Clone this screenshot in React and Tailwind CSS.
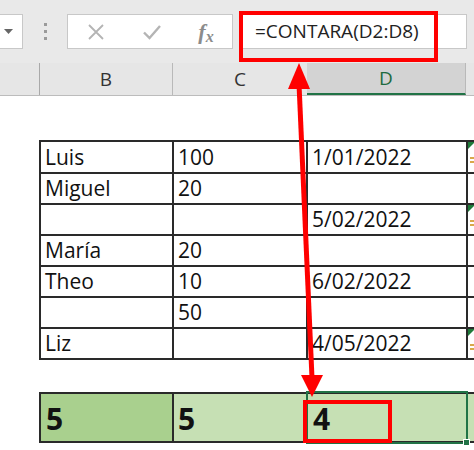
import React from 'react';

const rows = [
  { b: 'Luis', c: '100', d: '1/01/2022', h: 'h-[32px]', mark: true },
  { b: 'Miguel', c: '20', d: '', h: 'h-[31px]' },
  { b: '', c: '', d: '5/02/2022', h: 'h-[31px]', mark: true },
  { b: 'María', c: '20', d: '', h: 'h-[31px]' },
  { b: 'Theo', c: '10', d: '6/02/2022', h: 'h-[31px]' },
  { b: '', c: '50', d: '', h: 'h-[31px]' },
  { b: 'Liz', c: '', d: '4/05/2022', h: 'h-[31px]', mark: true },
];

const cellFont = { fontFamily: '"Open Sans", "Noto Sans", sans-serif' };

function Cell({ w, children }) {
  return (
    <div className={`${w} h-full flex items-end pl-[4px] pb-[4px] text-[21px] leading-none text-[#111] border-r-2 border-[#2a2a2a]`}>
      {children}
    </div>
  );
}

export default function App() {
  return (
    <div className="relative w-[474px] h-[450px] overflow-hidden bg-white" style={cellFont}>
      {/* toolbar */}
      <div className="h-[63px] bg-[#e9e9e9] flex items-start pt-[14px]">
        <div className="w-[23px] h-[35px] bg-white border border-l-0 border-[#c8c8c8] flex items-center pl-[4px]">
          <svg width="9" height="6" viewBox="0 0 9 6"><path d="M0 0h9L4.5 5z" fill="#666" /></svg>
        </div>
        <div className="w-[44px] h-[35px] flex flex-col items-center justify-center gap-[4px]">
          <span className="w-[3px] h-[3px] bg-[#9a9a9a]" />
          <span className="w-[3px] h-[3px] bg-[#9a9a9a]" />
          <span className="w-[3px] h-[3px] bg-[#9a9a9a]" />
        </div>
        <div className="w-[166px] h-[35px] bg-white border border-[#c8c8c8] flex items-center">
          <div className="w-[56px] flex justify-center">
            <svg width="18" height="18" viewBox="0 0 18 18"><path d="M2 2L16 16M16 2L2 16" stroke="#b4b4b4" strokeWidth="1.8" /></svg>
          </div>
          <div className="w-[56px] flex justify-center">
            <svg width="20" height="16" viewBox="0 0 20 16"><path d="M2 8.5L7.5 14L18 2" stroke="#b4b4b4" strokeWidth="2.4" fill="none" /></svg>
          </div>
          <div className="w-[52px] flex justify-center items-baseline text-[#8c8c8c] italic font-bold leading-none" style={{ fontFamily: '"Liberation Serif", serif' }}>
            <span className="text-[22px]">f</span><span className="text-[16px] relative top-[3px]">x</span>
          </div>
        </div>
        <div className="ml-[6px] w-[228px] h-[35px] bg-white border border-[#c8c8c8] flex items-center pl-[15px] text-[19px] text-[#222]">
          =CONTARA(D2:D8)
        </div>
      </div>

      {/* column headers */}
      <div className="h-[33px] bg-[#e6e6e6] border-b border-[#bcbcbc] flex text-[19px] text-[#333]">
        <div className="w-[40px] h-full border-r border-[#a9a9a9]" />
        <div className="w-[133px] h-full border-r border-[#b9b9b9] flex items-center justify-center">B</div>
        <div className="w-[134px] h-full flex items-center justify-center">C</div>
        <div className="w-[159px] h-full bg-[#d3d3d3] border-b-2 border-[#217346] border-r border-r-[#b9b9b9] flex items-center justify-center text-[#1e6b3f]">D</div>
        <div className="flex-1 h-full" />
      </div>

      {/* data table */}
      <div className="mt-[44px] ml-[39px] border-t-2 border-[#2a2a2a]">
        {rows.map((r, i) => (
          <div key={i} className={`${r.h} flex border-b-2 border-[#2a2a2a] border-l-2`}>
            <Cell w="w-[133px]">{r.b}</Cell>
            <Cell w="w-[134px]">{r.c}</Cell>
            <Cell w="w-[160px]">{r.d}</Cell>
            <div className="relative flex-1 h-full">
              {r.mark && (
                <>
                  <svg className="absolute left-0 top-0" width="7" height="7" viewBox="0 0 7 7"><path d="M0 0h7L0 7z" fill="#1f7a3a" /></svg>
                  <div className="absolute left-[2px] top-[15px] w-[5px] h-[2px] bg-[#d9a84a]" />
                  <div className="absolute left-[2px] top-[19px] w-[5px] h-[2px] bg-[#d9a84a]" />
                </>
              )}
            </div>
          </div>
        ))}
      </div>

      {/* totals row */}
      <div className="mt-[32px] ml-[39px] h-[51px] flex border-y-2 border-l-2 border-[#2a2a2a] text-[30px] font-bold leading-none text-[#111]">
        <div className="w-[133px] h-full bg-[#a9d08e] border-r-2 border-[#2a2a2a] flex items-end pl-[5px] pb-[7px]">5</div>
        <div className="w-[134px] h-full bg-[#c6e0b4] flex items-end pl-[4px] pb-[7px]">5</div>
        <div className="w-[160px] h-full bg-[#c6e0b4] flex items-end pl-[5px] pb-[7px]">4</div>
        <div className="flex-1 h-full bg-[#c6e0b4]" />
      </div>

      {/* selection + annotations */}
      <div className="absolute left-[306px] top-[391px] w-[162px] h-[53px] border-2 border-[#217346]" />
      <div className="absolute left-[463px] top-[439px] w-[7px] h-[7px] bg-[#217346] border border-white" />
      <div className="absolute left-[239px] top-[11px] w-[199px] h-[51px] border-[4px] border-[#ff0000]" />
      <div className="absolute left-[303px] top-[400px] w-[89px] h-[43px] border-[4px] border-[#ff0000]" />
      <svg className="absolute left-0 top-0 pointer-events-none" width="474" height="450" viewBox="0 0 474 450">
        <line x1="299" y1="84" x2="312" y2="378" stroke="#ff0000" strokeWidth="5" />
        <path d="M299 63L288 89L310 89Z" fill="#ff0000" />
        <path d="M312 397L301 375L323 375Z" fill="#ff0000" />
      </svg>
    </div>
  );
}
